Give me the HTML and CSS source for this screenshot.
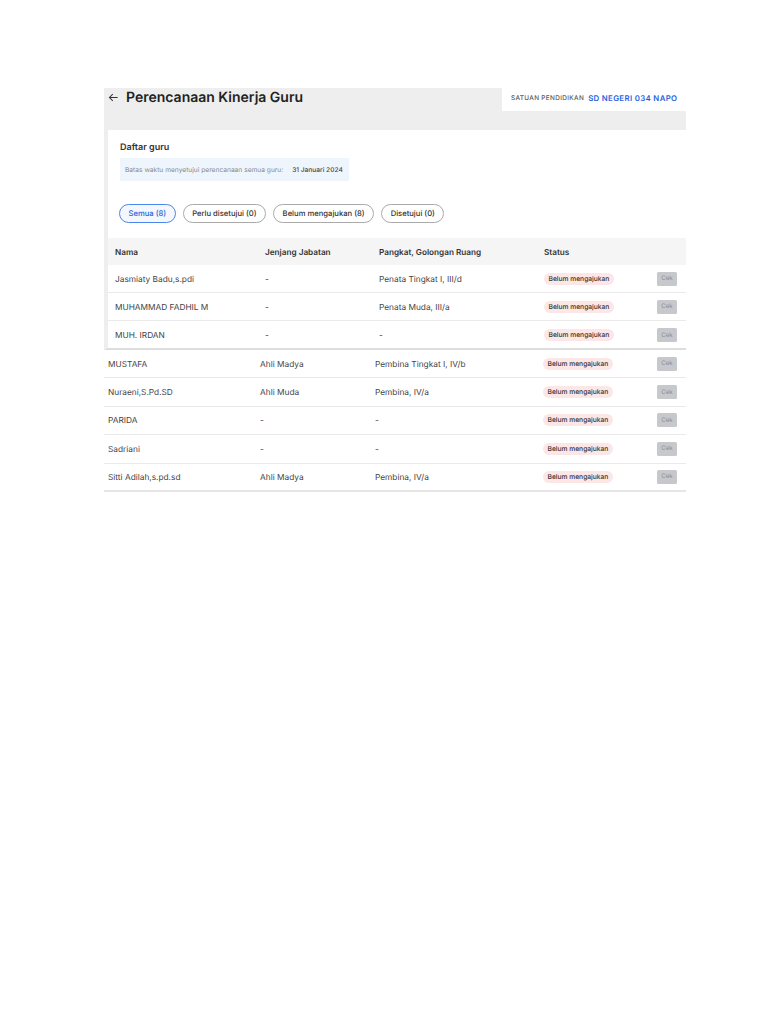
FILE: index.html
```html
<!DOCTYPE html>
<html lang="id">
<head>
<meta charset="utf-8">
<title>Perencanaan Kinerja Guru</title>
<link rel="stylesheet" href="styles.css">
</head>
<body>
<main class="sheet">
  <header class="topbar">
    <div class="heading">
      <svg class="back" viewBox="0 0 12 12" width="11" height="11" aria-hidden="true"><path d="M10.5 6H1.8M5.2 2.4 1.6 6l3.6 3.6" fill="none" stroke="#333" stroke-width="1.1"/></svg>
      <h1>Perencanaan Kinerja Guru</h1>
    </div>
    <div class="school"><span class="school-label">SATUAN PENDIDIKAN</span><span class="school-name">SD NEGERI 034 NAPO</span></div>
  </header>
  <div class="frame">
    <section class="card">
      <h2>Daftar guru</h2>
      <div class="notice"><span class="notice-label">Batas waktu menyetujui perencanaan semua guru:</span><span class="notice-date">31 Januari 2024</span></div>
      <div class="pills">
        <span class="pill active">Semua (8)</span>
        <span class="pill">Perlu disetujui (0)</span>
        <span class="pill">Belum mengajukan (8)</span>
        <span class="pill">Disetujui (0)</span>
      </div>
      <div class="row head"><span>Nama</span><span>Jenjang Jabatan</span><span>Pangkat, Golongan Ruang</span><span>Status</span></div>
      <div class="row"><span>Jasmiaty Badu,s.pdi</span><span>-</span><span>Penata Tingkat I, III/d</span><span class="badge">Belum mengajukan</span><span class="btn">Cek</span></div>
      <div class="row"><span>MUHAMMAD FADHIL M</span><span>-</span><span>Penata Muda, III/a</span><span class="badge">Belum mengajukan</span><span class="btn">Cek</span></div>
      <div class="row last"><span>MUH. IRDAN</span><span>-</span><span>-</span><span class="badge">Belum mengajukan</span><span class="btn">Cek</span></div>
    </section>
  </div>
  <section class="rest">
    <div class="row"><span>MUSTAFA</span><span>Ahli Madya</span><span>Pembina Tingkat I, IV/b</span><span class="badge">Belum mengajukan</span><span class="btn">Cek</span></div>
    <div class="row"><span>Nuraeni,S.Pd.SD</span><span>Ahli Muda</span><span>Pembina, IV/a</span><span class="badge">Belum mengajukan</span><span class="btn">Cek</span></div>
    <div class="row"><span>PARIDA</span><span>-</span><span>-</span><span class="badge">Belum mengajukan</span><span class="btn">Cek</span></div>
    <div class="row"><span>Sadriani</span><span>-</span><span>-</span><span class="badge">Belum mengajukan</span><span class="btn">Cek</span></div>
    <div class="row end"><span>Sitti Adilah,s.pd.sd</span><span>Ahli Madya</span><span>Pembina, IV/a</span><span class="badge">Belum mengajukan</span><span class="btn">Cek</span></div>
  </section>
</main>
</body>
</html>
```
FILE: styles.css
```css
* { box-sizing: border-box; }
html, body { margin: 0; background: #fff; }
body { font-family: Inter, "Liberation Sans", sans-serif; color: #333; text-rendering: geometricPrecision; }
.sheet { width: 582px; margin: 88px 0 0 104px; }
.topbar { height: 42px; background: #eee; display: flex; justify-content: space-between; align-items: flex-start; }
.heading { display: flex; align-items: center; height: 19px; padding-left: 4px; gap: 7px; }
.back { flex: none; }
h1 { margin: 0; font-size: 14px; line-height: 19px; font-weight: 600; color: #222; }
.school { width: 184px; height: 23px; background: #fff; display: flex; align-items: center; padding: 0 8px 3px 9px; gap: 4px; white-space: nowrap; }
.school-label { font-size: 6.4px; color: #555; letter-spacing: 0.35px; font-weight: 500; }
.school-name { font-size: 7.8px; color: #1f63e0; font-weight: 600; letter-spacing: 0.35px; }
.frame { border-left: 4px solid #eee; border-bottom: 2px solid #ddd; height: 220px; }
.card { background: #fff; border-top-left-radius: 3px; height: 218px; padding-top: 11px; }
h2 { margin: 0 0 3px 12px; font-size: 9px; line-height: 14px; font-weight: 600; color: #333; }
.notice { margin-left: 12px; width: 229px; height: 23px; background: #eef5fd; display: flex; align-items: center; padding-left: 5px; gap: 9px; white-space: nowrap; }
.notice-label { font-size: 6.65px; color: #888; }
.notice-date { font-size: 6.6px; color: #444; font-weight: 500; }
.pills { display: flex; gap: 7px; margin: 23px 0 15px 11px; }
.pill { height: 19px; border: 1px solid #aaa; border-radius: 10px; padding: 0 8.5px; display: flex; align-items: center; font-size: 7.65px; font-weight: 500; color: #333; white-space: nowrap; }
.pill.active { border-color: #4a86ee; color: #1f63e0; background: #f4f8fe; }
.row { display: grid; grid-template-columns: 150px 114px 165px 113px 20px; padding-left: 7px; align-items: center; height: 28px; border-bottom: 1px solid #eaeaea; font-size: 8.3px; color: #444; white-space: nowrap; }
.row > span { padding-top: 2px; }
.row.head { height: 27px; background: #f5f5f5; border-bottom: 0; font-size: 8.2px; font-weight: 600; color: #333; }
.row.head > span { padding-top: 0; }
.row.last { border-bottom: 0; }
.rest .row { grid-template-columns: 152px 115px 168px 114px 20px; padding-left: 4px; height: 28.4px; }
.rest .row.end { border-bottom: 2px solid #e6e6e6; }
.row > .badge { justify-self: start; height: 12px; line-height: 12px; padding: 0 4.5px; border-radius: 6px; background: #fde6e6; color: #333; font-size: 6.7px; font-weight: 500; }
.row > .btn { width: 20px; height: 14px; padding: 0; border-radius: 1.5px; background: #c6c8cc; color: #8a8d92; font-size: 6.2px; display: flex; align-items: center; justify-content: center; }
```
